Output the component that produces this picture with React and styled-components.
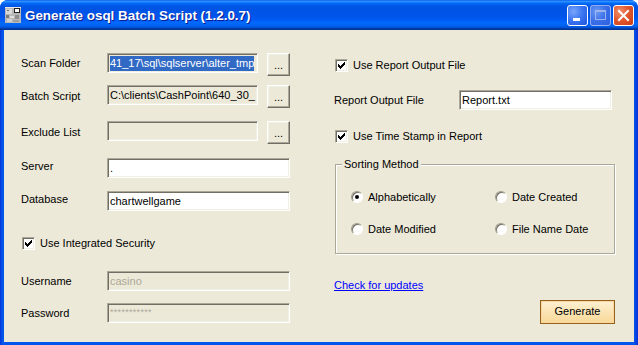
import React from "react";
import styled, { createGlobalStyle } from "styled-components";

const GlobalStyle = createGlobalStyle`
  html, body { margin: 0; padding: 0; background: #ffffff; }
  body { font-family: "Liberation Sans", Arial, sans-serif; font-size: 11px; color: #000; }
  * { box-sizing: border-box; }
`;

const Window = styled.div`
  width: 638px;
  height: 345px;
  display: flex;
  flex-direction: column;
  background: #0055ea;
  border-radius: 8px 8px 0 0;
  overflow: hidden;
`;

const TitleBar = styled.div`
  height: 30px;
  flex: none;
  display: flex;
  align-items: center;
  padding: 0 4px 0 5px;
  background: linear-gradient(
    to bottom,
    #0058ee 0%, #3593ff 4%, #288eff 6%, #127dff 8%, #036ffc 10%,
    #0262ee 14%, #0057e5 20%, #0054e3 24%, #0055eb 56%, #005bf5 66%,
    #026afe 76%, #0062ef 86%, #0052d6 92%, #0040ab 94%, #003092 100%
  );
`;

const TitleText = styled.div`
  flex: 1;
  margin-left: 4px;
  font-family: "Liberation Sans", Arial, sans-serif;
  font-weight: bold;
  font-size: 13.4px;
  color: #ffffff;
  text-shadow: 1px 1px 0 #0a1c8f;
  white-space: nowrap;
`;

const Controls = styled.div`
  display: flex;
  gap: 2px;
  align-self: flex-start;
  margin-top: 5px;
`;

const CtlButton = styled.div`
  width: 21px;
  height: 21px;
  border-radius: 3px;
  border: 1px solid ${(p) => (p.$disabled ? "rgba(255,255,255,0.45)" : "#ffffff")};
  background: ${(p) =>
    p.$kind === "close"
      ? "radial-gradient(circle at 30% 30%, #f0926e 0%, #e2582f 45%, #c63d15 100%)"
      : p.$disabled
      ? "radial-gradient(circle at 30% 30%, #6d9af5 0%, #3a6fe8 50%, #2d5fdd 100%)"
      : "radial-gradient(circle at 30% 30%, #79a6fb 0%, #3e78f2 45%, #1c53de 100%)"};
  display: flex;
  align-items: center;
  justify-content: center;
`;

const Frame = styled.div`
  flex: 1;
  display: flex;
  padding: 0 4px 3px 4px;
  background: linear-gradient(to right, #0831d9 0px, #0055ea 2px, #0055ea 634px, #0831d9 638px);
`;

const Client = styled.div`
  flex: 1;
  background: #ece9d8;
  display: flex;
  align-items: flex-start;
  padding-left: 17px;
  gap: 43px;
`;

const Column = styled.div`
  width: ${(p) => p.$w}px;
  display: flex;
  flex-direction: column;
`;

const Row = styled.div`
  display: flex;
  align-items: flex-start;
  height: ${(p) => p.$h}px;
  margin-top: ${(p) => p.$mt}px;
`;

const Label = styled.div`
  width: ${(p) => p.$w}px;
  flex: none;
  line-height: 20px;
  margin-top: ${(p) => p.$dy || 0}px;
  white-space: nowrap;
`;

const TextBox = styled.div`
  width: ${(p) => p.$w}px;
  height: 20px;
  flex: none;
  background: ${(p) => (p.$white ? "#ffffff" : "#ece9d8")};
  color: ${(p) => (p.$disabled ? "#aca899" : "#000000")};
  border-top: 1px solid #aca899;
  border-left: 1px solid #aca899;
  border-right: 1px solid #ffffff;
  border-bottom: 1px solid #ffffff;
  box-shadow: inset 1px 1px 0 #716f64, inset -1px -1px 0 #f1efe2;
  padding: 0 2px 0 2px;
  line-height: 18px;
  overflow: hidden;
  white-space: nowrap;
`;

const Selected = styled.span`
  background: #316ac5;
  color: #ffffff;
  display: inline-block;
  line-height: 15px;
`;

const Stars = styled.span`
  font-size: 9px;
  letter-spacing: 0.3px;
  position: relative;
  top: -2px;
`;

const BrowseButton = styled.div`
  width: 23px;
  height: 23px;
  margin-left: 9px;
  flex: none;
  background: #ece9d8;
  border-top: 1px solid #ffffff;
  border-left: 1px solid #ffffff;
  border-right: 1px solid #716f64;
  border-bottom: 1px solid #716f64;
  box-shadow: inset -1px -1px 0 #aca899, inset 1px 1px 0 #f1efe2;
  text-align: center;
  line-height: 22px;
`;

const CheckRow = styled.div`
  display: flex;
  align-items: center;
  gap: 5px;
  height: 14px;
  margin-top: ${(p) => p.$mt}px;
  margin-left: 1px;
  white-space: nowrap;
`;

const CheckBox = styled.div`
  width: 13px;
  height: 13px;
  flex: none;
  background: #ffffff;
  border-top: 1px solid #aca899;
  border-left: 1px solid #aca899;
  border-right: 1px solid #ffffff;
  border-bottom: 1px solid #ffffff;
  box-shadow: inset 1px 1px 0 #716f64, inset -1px -1px 0 #f1efe2;
  display: flex;
  align-items: center;
  justify-content: center;
`;

const GroupBox = styled.div`
  position: relative;
  margin-top: ${(p) => p.$mt}px;
  margin-left: 1px;
  width: 280px;
  height: 90px;
  border: 1px solid #aca899;
  box-shadow: inset 1px 1px 0 #ffffff, 1px 1px 0 #ffffff;
  padding: 25px 0 0 15px;
`;

const Legend = styled.div`
  position: absolute;
  top: -7px;
  left: 6px;
  padding: 0 2px;
  background: #ece9d8;
  line-height: 13px;
`;

const RadioGrid = styled.div`
  display: grid;
  grid-template-columns: 144px 1fr;
  row-gap: 18px;
`;

const RadioItem = styled.div`
  display: flex;
  align-items: center;
  gap: 5px;
  height: 14px;
  white-space: nowrap;
`;

const Radio = styled.div`
  width: 12px;
  height: 12px;
  flex: none;
  border-radius: 50%;
  background: #ffffff;
  border: 1px solid;
  border-color: #9d9a8c #ffffff #ffffff #9d9a8c;
  box-shadow: inset 1px 1px 0 #716f64;
  display: flex;
  align-items: center;
  justify-content: center;
`;

const Dot = styled.div`
  width: 4px;
  height: 4px;
  border-radius: 50%;
  background: #000000;
`;

const Link = styled.a`
  margin-top: ${(p) => p.$mt}px;
  color: #0000ff;
  text-decoration: underline;
  line-height: 14px;
  align-self: flex-start;
  cursor: pointer;
`;

const GenerateButton = styled.div`
  margin-top: ${(p) => p.$mt}px;
  align-self: flex-end;
  width: 75px;
  height: 24px;
  border: 1px solid #94621b;
  background: linear-gradient(to bottom, #fdf0d2 0%, #fbe4b4 50%, #f8d898 100%);
  box-shadow: inset 0 0 0 1px #fad7a0;
  text-align: center;
  line-height: 21px;
  font-size: 11px;
`;

const CheckMark = () => (
  <svg width="7" height="7" viewBox="0 0 7 7" shapeRendering="crispEdges">
    <rect x="6" y="0" width="1" height="1" fill="#000" />
    <rect x="5" y="1" width="2" height="1" fill="#000" />
    <rect x="0" y="2" width="1" height="1" fill="#000" />
    <rect x="4" y="2" width="3" height="1" fill="#000" />
    <rect x="0" y="3" width="2" height="1" fill="#000" />
    <rect x="3" y="3" width="3" height="1" fill="#000" />
    <rect x="0" y="4" width="5" height="1" fill="#000" />
    <rect x="1" y="5" width="3" height="1" fill="#000" />
    <rect x="2" y="6" width="1" height="1" fill="#000" />
  </svg>
);

const AppIcon = () => (
  <svg width="16" height="16" viewBox="0 0 16 16" shapeRendering="crispEdges">
    <rect x="0" y="0" width="16" height="16" fill="#b8b8b8" />
    <rect x="0" y="0" width="16" height="1" fill="#e8e8e8" />
    <rect x="1" y="2" width="6" height="5" fill="#d8d8d8" />
    <rect x="2" y="3" width="2" height="1" fill="#6a6a6a" />
    <rect x="9" y="1" width="6" height="5" fill="#202020" />
    <rect x="10" y="2" width="4" height="3" fill="#ffffff" />
    <rect x="1" y="8" width="3" height="3" fill="#7c7c7c" />
    <rect x="5" y="9" width="4" height="2" fill="#e0e0e0" />
    <rect x="10" y="8" width="4" height="4" fill="#8e8e8e" />
    <rect x="2" y="12" width="5" height="3" fill="#d0d0d0" />
    <rect x="8" y="13" width="6" height="2" fill="#a0a0a0" />
  </svg>
);

const MinIcon = () => (
  <svg width="19" height="19" viewBox="0 0 19 19">
    <rect x="5" y="12" width="7" height="3" fill="#ffffff" />
  </svg>
);

const MaxIcon = () => (
  <svg width="19" height="19" viewBox="0 0 19 19">
    <rect x="4.5" y="4.5" width="10" height="9" fill="none" stroke="#9bb4f0" strokeWidth="1" />
    <rect x="4" y="4" width="11" height="2" fill="#9bb4f0" />
  </svg>
);

const CloseIcon = () => (
  <svg width="19" height="19" viewBox="0 0 19 19">
    <path d="M5 5 L14 14 M14 5 L5 14" stroke="#ffffff" strokeWidth="2" strokeLinecap="square" />
  </svg>
);

const Check = ({ mt, children }) => (
  <CheckRow $mt={mt}>
    <CheckBox>
      <CheckMark />
    </CheckBox>
    <span>{children}</span>
  </CheckRow>
);

const RadioOpt = ({ checked, children }) => (
  <RadioItem>
    <Radio>{checked && <Dot />}</Radio>
    <span>{children}</span>
  </RadioItem>
);

export default function App() {
  return (
    <>
      <GlobalStyle />
      <Window>
        <TitleBar>
          <AppIcon />
          <TitleText>Generate osql Batch Script (1.2.0.7)</TitleText>
          <Controls>
            <CtlButton>
              <MinIcon />
            </CtlButton>
            <CtlButton $disabled>
              <MaxIcon />
            </CtlButton>
            <CtlButton $kind="close">
              <CloseIcon />
            </CtlButton>
          </Controls>
        </TitleBar>
        <Frame>
          <Client>
            <Column $w={270}>
              <Row $h={23} $mt={23}>
                <Label $w={86}>Scan Folder</Label>
                <TextBox $w={151}>
                  <Selected>41_17\sql\sqlserver\alter_tmp</Selected>
                </TextBox>
                <BrowseButton>...</BrowseButton>
              </Row>
              <Row $h={23} $mt={9}>
                <Label $w={86} $dy={1}>Batch Script</Label>
                <TextBox $w={151}>C:\clients\CashPoint\640_30_</TextBox>
                <BrowseButton>...</BrowseButton>
              </Row>
              <Row $h={23} $mt={13}>
                <Label $w={86} $dy={1}>Exclude List</Label>
                <TextBox $w={151} $disabled></TextBox>
                <BrowseButton>...</BrowseButton>
              </Row>
              <Row $h={20} $mt={14}>
                <Label $w={86} $dy={-2}>Server</Label>
                <TextBox $w={183} $white>.</TextBox>
              </Row>
              <Row $h={20} $mt={13}>
                <Label $w={86} $dy={-2}>Database</Label>
                <TextBox $w={183} $white>chartwellgame</TextBox>
              </Row>
              <Check mt={25}>Use Integrated Security</Check>
              <Row $h={20} $mt={21}>
                <Label $w={86}>Username</Label>
                <TextBox $w={183} $disabled>casino</TextBox>
              </Row>
              <Row $h={20} $mt={12}>
                <Label $w={86}>Password</Label>
                <TextBox $w={183} $disabled>
                  <Stars>***********</Stars>
                </TextBox>
              </Row>
            </Column>
            <Column $w={281}>
              <Check mt={28}>Use Report Output File</Check>
              <Row $h={20} $mt={18}>
                <Label $w={125}>Report Output File</Label>
                <TextBox $w={153} $white>Report.txt</TextBox>
              </Row>
              <Check mt={19}>Use Time Stamp in Report</Check>
              <GroupBox $mt={21}>
                <Legend>Sorting Method</Legend>
                <RadioGrid>
                  <RadioOpt checked>Alphabetically</RadioOpt>
                  <RadioOpt>Date Created</RadioOpt>
                  <RadioOpt>Date Modified</RadioOpt>
                  <RadioOpt>File Name Date</RadioOpt>
                </RadioGrid>
              </GroupBox>
              <Link $mt={24}>Check for updates</Link>
              <GenerateButton $mt={8}>Generate</GenerateButton>
            </Column>
          </Client>
        </Frame>
      </Window>
    </>
  );
}
